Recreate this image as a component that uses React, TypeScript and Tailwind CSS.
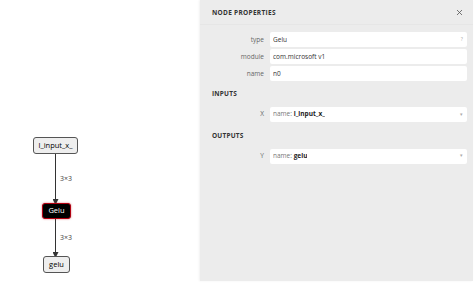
import React from "react";

const font = { fontFamily: '"Open Sans", "Noto Sans", sans-serif' };

function Field({ children, right }: { children: React.ReactNode; right?: string }) {
  return (
    <div className="flex h-[15px] items-center justify-between rounded-[2px] bg-white pl-[3px] pr-[4px] text-[6.5px] text-[#333]">
      <div className="truncate">{children}</div>
      {right && <span className="text-[5px] text-[#aaa]">{right}</span>}
    </div>
  );
}

function Row({ label, children, right }: { label: string; children: React.ReactNode; right?: string }) {
  return (
    <div className="grid grid-cols-[64px_1fr] items-center gap-x-[6px]">
      <div className="text-right text-[6.5px] text-[#666]">{label}</div>
      <Field right={right}>{children}</Field>
    </div>
  );
}

function Section({ title }: { title: string }) {
  return <div className="px-[12px] text-[6.5px] font-bold tracking-[0.2px] text-[#333]">{title}</div>;
}

export default function App() {
  return (
    <div className="relative flex h-[283px] w-[474px] bg-white" style={font}>
      <div className="relative h-full w-[200px]">
        <svg className="absolute left-0 top-0" width="200" height="283">
          <defs>
            <marker id="arr" markerWidth="6" markerHeight="6" refX="5" refY="3" orient="auto" markerUnits="userSpaceOnUse">
              <path d="M0,0 L6,3 L0,6 z" fill="#333" />
            </marker>
          </defs>
          <line x1="55.5" y1="154" x2="55.5" y2="204" stroke="#333" strokeWidth="1" markerEnd="url(#arr)" />
          <line x1="55.5" y1="219" x2="55.5" y2="257" stroke="#333" strokeWidth="1" markerEnd="url(#arr)" />
        </svg>
        <div className="absolute left-[33px] top-[137px] flex h-[17px] w-[45px] items-center justify-center rounded-[3px] border border-[#555] bg-[#eeeeee] text-[7.5px] text-black">
          l_input_x_
        </div>
        <div className="absolute left-[60px] top-[174px] text-[7px] text-[#444]">3×3</div>
        <div className="absolute left-[42px] top-[203px] flex h-[16px] w-[29px] items-center justify-center rounded-[3px] border-[1.5px] border-[#b00010] bg-black text-[7.5px] text-white shadow-[0_0_2px_rgba(200,0,20,0.6)]">
          Gelu
        </div>
        <div className="absolute left-[60px] top-[233px] text-[7px] text-[#444]">3×3</div>
        <div className="absolute left-[43px] top-[256px] flex h-[17px] w-[27px] items-center justify-center rounded-[3px] border border-[#555] bg-[#eeeeee] text-[7.5px] text-black">
          gelu
        </div>
      </div>
      <div className="flex h-[281px] w-[273px] flex-col bg-[#ececec] shadow-[-1px_0_2px_rgba(0,0,0,0.06)]">
        <div className="flex h-[25px] items-center justify-between border-b border-[#e6e6e6] pl-[12px] pr-[10px] pt-[1px]">
          <span className="text-[6.5px] font-bold tracking-[0.3px] text-[#333]">NODE PROPERTIES</span>
          <svg width="7" height="7" viewBox="0 0 7 7">
            <path d="M1 1 L6 6 M6 1 L1 6" stroke="#555" strokeWidth="0.8" />
          </svg>
        </div>
        <div className="mt-[7px] flex flex-col gap-[2px] pr-[6px]">
          <Row label="type" right="?">Gelu</Row>
          <Row label="module">com.microsoft v1</Row>
          <Row label="name">n0</Row>
        </div>
        <div className="mt-[8px]">
          <Section title="INPUTS" />
        </div>
        <div className="mt-[8px] pr-[6px]">
          <Row label="X" right="▾">
            <span className="text-[#777]">name: </span>
            <span className="font-bold text-[#222]">l_input_x_</span>
          </Row>
        </div>
        <div className="mt-[9px]">
          <Section title="OUTPUTS" />
        </div>
        <div className="mt-[8px] pr-[6px]">
          <Row label="Y" right="▾">
            <span className="text-[#777]">name: </span>
            <span className="font-bold text-[#222]">gelu</span>
          </Row>
        </div>
      </div>
    </div>
  );
}
